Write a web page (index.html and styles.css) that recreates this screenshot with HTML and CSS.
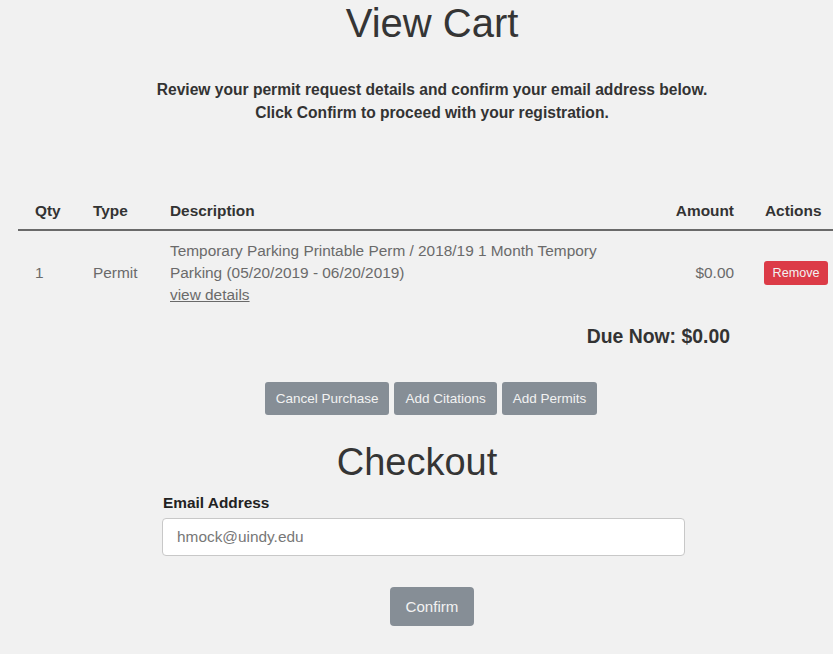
FILE: index.html
```html
<!DOCTYPE html>
<html lang="en">
<head>
<meta charset="utf-8">
<title>View Cart</title>
<link rel="stylesheet" href="styles.css">
</head>
<body>
<main class="page">
  <h1 class="title">View Cart</h1>
  <p class="intro">Review your permit request details and confirm your email address below.<br>Click Confirm to proceed with your registration.</p>

  <table class="cart">
    <colgroup>
      <col class="c-qty"><col class="c-type"><col class="c-desc"><col class="c-amt"><col class="c-act">
    </colgroup>
    <thead>
      <tr><th>Qty</th><th>Type</th><th>Description</th><th class="num">Amount</th><th>Actions</th></tr>
    </thead>
    <tbody>
      <tr>
        <td>1</td>
        <td>Permit</td>
        <td>Temporary Parking Printable Perm / 2018/19 1 Month Tempory Parking (05/20/2019 - 06/20/2019)<br><a class="details" href="#">view details</a></td>
        <td class="num">$0.00</td>
        <td><button class="btn btn-danger">Remove</button></td>
      </tr>
    </tbody>
  </table>

  <div class="due">Due Now: $0.00</div>

  <div class="actions">
    <button class="btn btn-secondary">Cancel Purchase</button>
    <button class="btn btn-secondary">Add Citations</button>
    <button class="btn btn-secondary">Add Permits</button>
  </div>

  <section class="checkout">
    <h2 class="checkout-title">Checkout</h2>
    <label class="label" for="email">Email Address</label>
    <input class="input" id="email" type="text" value="hmock@uindy.edu">
  </section>

  <div class="confirm-row">
    <button class="btn btn-secondary btn-lg">Confirm</button>
  </div>
</main>
</body>
</html>
```

FILE: styles.css
```css
html, body {
  margin: 0;
  padding: 0;
  overflow: hidden;
  background: #f1f1f1;
}
body {
  font-family: "Liberation Sans", Arial, sans-serif;
  color: #333;
}
.page {
  width: 828px;
  margin-left: 18px;
}
.title {
  margin: -1px 0 0;
  font-size: 40px;
  font-weight: 400;
  line-height: 48px;
  text-align: center;
  color: #353535;
}
.intro {
  margin: 31px 0 0;
  font-size: 15.6px;
  font-weight: 700;
  line-height: 23px;
  text-align: center;
  color: #333;
}
.cart {
  margin-top: 69px;
  width: 828px;
  table-layout: fixed;
  border-collapse: collapse;
  font-size: 15.4px;
  line-height: 22px;
}
.c-qty { width: 58px; }
.c-type { width: 77px; }
.c-desc { width: 480px; }
.c-amt { width: 115px; }
.c-act { width: 98px; }
.cart th {
  padding: 7px 13px 7px 17px;
  text-align: left;
  font-weight: 700;
  color: #333;
  border-bottom: 2px solid #6a6a6a;
}
.cart td {
  padding: 9px 13px 9px 17px;
  vertical-align: middle;
  color: #6a6a6a;
}
.cart .num {
  text-align: right;
  padding-right: 14px;
}
.details {
  color: #6a6a6a;
  text-decoration: underline;
}
.btn {
  font-family: "Liberation Sans", Arial, sans-serif;
  border: none;
  border-radius: 3px;
  color: #f2f2f2;
  cursor: pointer;
}
.btn-danger {
  background: #dc3b47;
  font-size: 12.6px;
  line-height: 16px;
  padding: 4px 8px;
  height: 24px;
  width: 64px;
  margin-left: -1px;
}
.btn-secondary {
  background: #868e96;
  font-size: 13.5px;
  line-height: 19px;
  padding: 7px 11px;
  height: 33px;
}
.btn-lg {
  font-size: 15.1px;
  line-height: 21px;
  padding: 9px 16px;
  height: 39px;
  border-radius: 4px;
}
.due {
  margin-top: 9px;
  padding-right: 116px;
  text-align: right;
  font-size: 19.4px;
  line-height: 24px;
  font-weight: 700;
  color: #333;
}
.actions {
  margin-top: 34px;
  display: flex;
  justify-content: center;
  gap: 5px;
  padding-right: 2px;
}
.checkout {
  margin-left: 144px;
  width: 523px;
}
.checkout-title {
  margin: 23px 0 0;
  padding-right: 13px;
  font-size: 38px;
  font-weight: 400;
  line-height: 48px;
  text-align: center;
  color: #353535;
}
.label {
  display: block;
  margin-top: 6px;
  padding-left: 1px;
  font-size: 15.4px;
  line-height: 22px;
  font-weight: 700;
  color: #222;
}
.input {
  display: block;
  box-sizing: border-box;
  margin-top: 4px;
  width: 523px;
  height: 38px;
  padding: 0 14px;
  border: 1px solid #c8c8c8;
  border-radius: 4px;
  background: #fff;
  font-family: "Liberation Sans", Arial, sans-serif;
  font-size: 15.4px;
  color: #777;
}
.confirm-row {
  margin-top: 31px;
  display: flex;
  justify-content: center;
}
```
